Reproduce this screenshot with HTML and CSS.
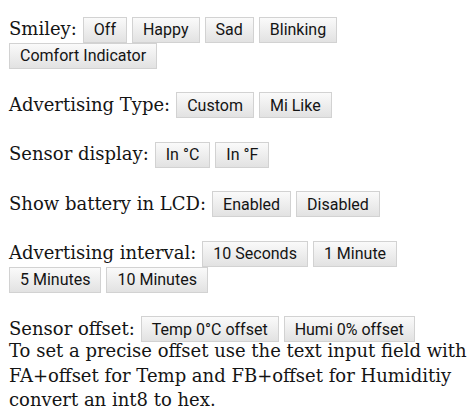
FILE: index.html
```html
<!DOCTYPE html>
<html lang="en">
<head>
  <meta charset="UTF-8">
  <meta name="viewport" content="width=device-width, initial-scale=1.0">
  <title>Settings</title>
  <link rel="stylesheet" href="styles.css">
</head>
<body>
  <div class="settings">
    <!-- Smiley -->
    <div class="row">
      <span class="label">Smiley:</span>
      <button class="btn">Off</button>
      <button class="btn">Happy</button>
      <button class="btn">Sad</button>
      <button class="btn">Blinking</button>
      <button class="btn">Comfort Indicator</button>
    </div>

    <!-- Advertising Type -->
    <div class="row">
      <span class="label">Advertising Type:</span>
      <button class="btn">Custom</button>
      <button class="btn">Mi Like</button>
    </div>

    <!-- Sensor display -->
    <div class="row">
      <span class="label">Sensor display:</span>
      <button class="btn">In °C</button>
      <button class="btn">In °F</button>
    </div>

    <!-- Battery -->
    <div class="row">
      <span class="label">Show battery in LCD:</span>
      <button class="btn">Enabled</button>
      <button class="btn">Disabled</button>
    </div>

    <!-- Advertising interval -->
    <div class="row">
      <span class="label">Advertising interval:</span>
      <button class="btn">10 Seconds</button>
      <button class="btn">1 Minute</button>
      <button class="btn">5 Minutes</button>
      <button class="btn">10 Minutes</button>
    </div>

    <!-- Sensor offset -->
    <div class="row row-last">
      <span class="label">Sensor offset:</span>
      <button class="btn">Temp 0°C offset</button>
      <button class="btn">Humi 0% offset</button>
    </div>
    <p class="note">To set a precise offset use the text input field with FA+offset for Temp and FB+offset for Humiditiy convert an int8 to hex.</p>
  </div>
</body>
</html>
```

FILE: styles.css
```css
/* General */
body {
  margin: 0;
  padding: 16px 6px 0 9px;
  background: #ffffff;
  color: #141414;
  font-family: 'DejaVu Serif', serif;
  font-size: 18px;
}

/* Rows of label + buttons */
.row {
  display: flex;
  flex-wrap: wrap;
  align-items: baseline;
  column-gap: 5px;
  margin-bottom: 23px;
}

.row-last {
  margin-bottom: 0;
}

.label {
  margin-right: 1px;
  line-height: 26px;
}

/* Buttons */
.btn {
  height: 26px;
  padding: 0 10px;
  border: 1px solid #d2d2d2;
  border-radius: 0;
  background: linear-gradient(#fafafa, #e2e2e2);
  color: #141414;
  font-family: Roboto, sans-serif;
  font-size: 16px;
  cursor: pointer;
}

/* Note text */
.note {
  margin: -3px 0 0;
  line-height: 24.5px;
}
```
